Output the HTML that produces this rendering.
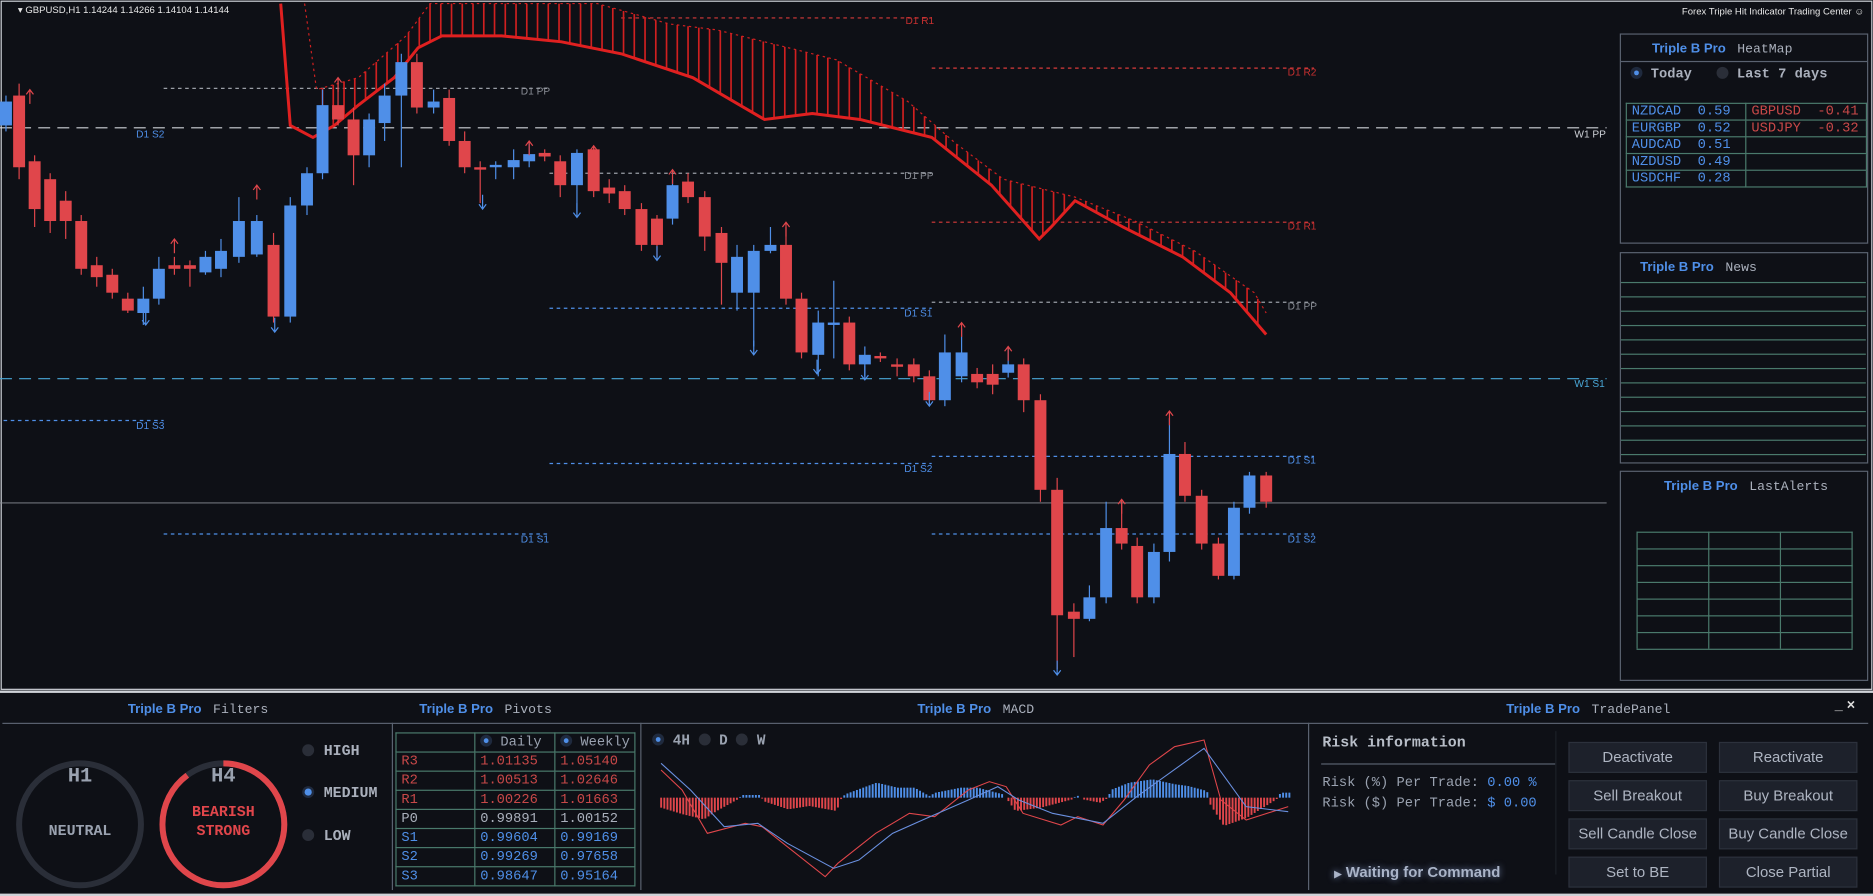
<!DOCTYPE html>
<html><head><meta charset="utf-8"><style>
html,body{margin:0;padding:0;background:#0e1016;overflow:hidden}
#w{position:absolute;left:0;top:0;width:1568px;height:750px;transform:scale(1.19452,1.19467);transform-origin:0 0;background:#0e1016;font-family:"Liberation Mono",monospace;color:#c8ccd6}
.a{position:absolute}
.tb{color:#4f8fe8;font-family:"Liberation Sans",sans-serif;font-weight:bold;font-size:11px}
.tt{color:#aab0bc;font-size:11px}
.pn{position:absolute;border:1px solid #5a6270;background:#0e1016}
.btn{position:absolute;width:114px;height:24px;background:#1d212b;border:1px solid #2c313c;color:#aeb5c2;font-family:"Liberation Sans",sans-serif;font-size:12.5px;text-align:center;line-height:24px}
table{border-collapse:collapse;table-layout:fixed}
.pv td{border:1px solid #4a7a6c;height:15px;padding:0 4px;font-size:11.5px;line-height:15px;white-space:nowrap;overflow:hidden}
.hm td{border:1px solid #4a7a6c;height:13px;padding:0 4px;font-size:11.5px;line-height:13px;white-space:nowrap}
.rad{display:inline-block;width:10px;height:10px;border-radius:50%;background:#2a2e38;vertical-align:middle;position:relative;top:-1px}
.rad.on{background:#1f2a3e}
.rad.on:after{content:"";position:absolute;left:3px;top:3px;width:4px;height:4px;border-radius:50%;background:#4f8fe8}
</style></head><body><div id="w">
<svg class="a" style="left:0;top:0" width="1568" height="578" id="ch">
<rect x="1" y="1" width="1566" height="576" fill="none" stroke="#cfd2d8" stroke-width="1"/>
<line x1="0" y1="107" x2="1345" y2="107" stroke="#cfd2d8" stroke-dasharray="10,6"/>
<line x1="0" y1="317" x2="1345" y2="317" stroke="#4aa8d8" stroke-dasharray="10,6"/>
<line x1="0" y1="421" x2="1345" y2="421" stroke="#8a8e96" stroke-width="0.8"/>
<g stroke-dasharray="3,3" stroke-width="1">
<line x1="137" y1="74" x2="460" y2="74" stroke="#9a9ea6"/>
<line x1="460" y1="145" x2="780" y2="145" stroke="#9a9ea6"/>
<line x1="780" y1="253" x2="1100" y2="253" stroke="#9a9ea6"/>
<line x1="520" y1="15" x2="780" y2="15" stroke="#d83a3a"/>
<line x1="780" y1="57" x2="1100" y2="57" stroke="#d83a3a"/>
<line x1="780" y1="186" x2="1100" y2="186" stroke="#d83a3a"/>
<line x1="460" y1="258" x2="780" y2="258" stroke="#4f8fe8"/>
<line x1="780" y1="382" x2="1100" y2="382" stroke="#4f8fe8"/>
<line x1="460" y1="388" x2="780" y2="388" stroke="#4f8fe8"/>
<line x1="780" y1="447" x2="1100" y2="447" stroke="#4f8fe8"/>
<line x1="137" y1="447" x2="460" y2="447" stroke="#4f8fe8"/>
<line x1="3" y1="352" x2="137" y2="352" stroke="#4f8fe8"/>
</g>
<g font-family="Liberation Sans,sans-serif" font-size="8.5">
<text x="436" y="79" fill="#8a8e96">D1 PP</text><text x="757" y="150" fill="#8a8e96">D1 PP</text><text x="1078" y="259" fill="#8a8e96">D1 PP</text>
<text x="758" y="20" fill="#c83030">D1 R1</text><text x="1078" y="63" fill="#c83030">D1 R2</text><text x="1078" y="192" fill="#c83030">D1 R1</text>
<text x="114" y="115" fill="#4f8fe8">D1 S2</text><text x="114" y="359" fill="#4f8fe8">D1 S3</text><text x="436" y="454" fill="#4f8fe8">D1 S1</text>
<text x="757" y="265" fill="#4f8fe8">D1 S1</text><text x="757" y="395" fill="#4f8fe8">D1 S2</text><text x="1078" y="388" fill="#4f8fe8">D1 S1</text><text x="1078" y="454" fill="#4f8fe8">D1 S2</text>
<text x="1318" y="115" fill="#cfd2d8">W1 PP</text><text x="1318" y="324" fill="#4aa8d8">W1 S1</text>
<text x="15" y="11" fill="#e8e8e8" font-size="8">▾ GBPUSD,H1  1.14244 1.14266 1.14104 1.14144</text>
<text x="1408" y="12" fill="#e8e8e8" font-size="8">Forex Triple Hit Indicator Trading Center ☺</text>
</g>
<g id="band"></g><g id="cd"></g>
</svg>
<div class="pn" style="left:1356px;top:28px;width:206px;height:174px">
<div class="a" style="left:0;top:0;width:206px;height:22px;border-bottom:1px solid #5a6270;line-height:22px"><span class="tb" style="margin-left:26px">Triple B Pro</span> <span class="tt">HeatMap</span></div>
<div class="a" style="left:8px;top:27px;font-size:11.5px;font-weight:bold;color:#aab0bc"><span class="rad on"></span> Today &nbsp; <span class="rad"></span> Last 7 days</div>
<table class="hm a" style="left:4px;top:57px"><tr><td style="color:#4f8fe8;width:92px">NZDCAD&nbsp;&nbsp;0.59</td><td style="color:#c84848;width:92px">GBPUSD&nbsp;&nbsp;-0.41</td></tr><tr><td style="color:#4f8fe8">EURGBP&nbsp;&nbsp;0.52</td><td style="color:#c84848">USDJPY&nbsp;&nbsp;-0.32</td></tr><tr><td style="color:#4f8fe8">AUDCAD&nbsp;&nbsp;0.51</td><td></td></tr><tr><td style="color:#4f8fe8">NZDUSD&nbsp;&nbsp;0.49</td><td></td></tr><tr><td style="color:#4f8fe8">USDCHF&nbsp;&nbsp;0.28</td><td></td></tr></table>
</div>
<div class="pn" style="left:1356px;top:211px;width:206px;height:175px">
<div class="a" style="left:0;top:0;width:206px;height:22px;line-height:22px"><span class="tb" style="margin-left:16px">Triple B Pro</span> <span class="tt">News</span></div>
<div id="news"></div>
</div>
<div class="pn" style="left:1356px;top:394px;width:206px;height:174px">
<div class="a" style="left:0;top:0;width:206px;height:22px;line-height:22px"><span class="tb" style="margin-left:36px">Triple B Pro</span> <span class="tt">LastAlerts</span></div>
<div id="al"></div>
</div>
<div class="a" style="left:0;top:578px;width:1568px;height:172px;border-top:2px solid #cfd2d8;box-sizing:border-box;background:#0e1016"></div>
<div class="a" style="left:2px;top:605px;width:1562px;height:1px;background:#5a6270"></div>
<div class="a" style="left:0;top:748px;width:1568px;height:2px;background:#cfd2d8"></div>
<div class="a" style="left:328px;top:605px;width:1px;height:140px;background:#5a6270"></div>
<div class="a" style="left:536px;top:605px;width:1px;height:140px;background:#5a6270"></div>
<div class="a" style="left:1095px;top:605px;width:1px;height:140px;background:#5a6270"></div>
<div class="a" style="left:107px;top:584px"><span class="tb">Triple B Pro</span> <span class="tt">Filters</span></div>
<div class="a" style="left:351px;top:584px"><span class="tb">Triple B Pro</span> <span class="tt">Pivots</span></div>
<div class="a" style="left:768px;top:584px"><span class="tb">Triple B Pro</span> <span class="tt">MACD</span></div>
<div class="a" style="left:1261px;top:584px"><span class="tb">Triple B Pro</span> <span class="tt">TradePanel</span></div>
<div class="a" style="left:1536px;top:583px;color:#ddd;font-size:12px;font-family:'Liberation Sans',sans-serif;font-weight:bold">_ ×</div>
<svg class="a" style="left:0;top:606px" width="330" height="142">
<circle cx="67" cy="84" r="51" fill="none" stroke="#2a2e38" stroke-width="5"/>
<circle cx="187" cy="84" r="51" fill="none" stroke="#2a2e38" stroke-width="5"/>
<circle cx="187" cy="84" r="51" fill="none" stroke="#e0464b" stroke-width="5" stroke-dasharray="288 320" transform="rotate(-90 187 84)"/>
<text x="67" y="48" fill="#9aa2b0" font-size="17" font-weight="bold" text-anchor="middle" font-family="Liberation Mono">H1</text>
<text x="67" y="93" fill="#9aa2b0" font-size="12.5" font-weight="bold" text-anchor="middle" font-family="Liberation Mono">NEUTRAL</text>
<text x="187" y="48" fill="#9aa2b0" font-size="17" font-weight="bold" text-anchor="middle" font-family="Liberation Mono">H4</text>
<text x="187" y="77" fill="#e0464b" font-size="12.5" font-weight="bold" text-anchor="middle" font-family="Liberation Mono">BEARISH</text>
<text x="187" y="93" fill="#e0464b" font-size="12.5" font-weight="bold" text-anchor="middle" font-family="Liberation Mono">STRONG</text>
<circle cx="258" cy="22" r="5" fill="#2a2e38"/><circle cx="258" cy="57" r="5" fill="#1f2a3e"/><circle cx="258" cy="57" r="3" fill="#4f8fe8"/><circle cx="258" cy="93" r="5" fill="#2a2e38"/>
<g fill="#aab0bc" font-size="12.5" font-weight="bold" font-family="Liberation Mono"><text x="271" y="26">HIGH</text><text x="271" y="61">MEDIUM</text><text x="271" y="97">LOW</text></g>
</svg>
<table class="pv a" style="left:331px;top:613px;width:200px">
<col style="width:66px"><col style="width:67px"><col style="width:67px">
<tr><td></td><td style="color:#9aa2b0"><span class="rad on"></span> Daily</td><td style="color:#9aa2b0"><span class="rad on"></span> Weekly</td></tr>
<tr style="color:#c84848"><td>R3</td><td>1.01135</td><td>1.05140</td></tr>
<tr style="color:#c84848"><td>R2</td><td>1.00513</td><td>1.02646</td></tr>
<tr style="color:#c84848"><td>R1</td><td>1.00226</td><td>1.01663</td></tr>
<tr style="color:#aab0bc"><td>P0</td><td>0.99891</td><td>1.00152</td></tr>
<tr style="color:#4f8fe8"><td>S1</td><td>0.99604</td><td>0.99169</td></tr>
<tr style="color:#4f8fe8"><td>S2</td><td>0.99269</td><td>0.97658</td></tr>
<tr style="color:#4f8fe8"><td>S3</td><td>0.98647</td><td>0.95164</td></tr>
</table>
<div class="a" style="left:546px;top:613px;font-size:12px;font-weight:bold;color:#9aa2b0"><span class="rad on"></span> 4H <span class="rad"></span> D <span class="rad"></span> W</div>
<svg class="a" style="left:0;top:0" width="1568" height="750" id="macd"></svg>
<div class="a" style="left:1107px;top:615px;font-size:12.5px;font-weight:bold;color:#b8bec8">Risk information</div>
<div class="a" style="left:1106px;top:639px;width:196px;height:1px;background:#5a6270"></div>
<div class="a" style="left:1302px;top:612px;width:1px;height:120px;background:#1c2028"></div>
<div class="a" style="left:1107px;top:647px;font-size:11.5px;color:#9aa2b0;line-height:17px">Risk (%) Per Trade: <span style="color:#4f8fe8">0.00 %</span><br>Risk ($) Per Trade: <span style="color:#4f8fe8">$ 0.00</span></div>
<div class="a" style="left:1117px;top:723px;font-family:'Liberation Sans',sans-serif;font-weight:bold;font-size:12.5px;color:#aab4c8;text-shadow:0 0 6px #6a7aa0"><span style="font-size:8px">▶</span> Waiting for Command</div>
<div class="btn" style="left:1313px;top:621px">Deactivate</div><div class="btn" style="left:1439px;top:621px">Reactivate</div>
<div class="btn" style="left:1313px;top:653px">Sell Breakout</div><div class="btn" style="left:1439px;top:653px">Buy Breakout</div>
<div class="btn" style="left:1313px;top:685px">Sell Candle Close</div><div class="btn" style="left:1439px;top:685px">Buy Candle Close</div>
<div class="btn" style="left:1313px;top:717px">Set to BE</div><div class="btn" style="left:1439px;top:717px">Close Partial</div>
</div>
<script>
var NS="http://www.w3.org/2000/svg";
function el(p,t,a){var e=document.createElementNS(NS,t);for(var k in a)e.setAttribute(k,a[k]);p.appendChild(e);return e}
var lo=[[235,3],[243,105],[262,115],[280,105],[300,88],[330,65],[350,40],[370,30],[420,30],[470,35],[520,45],[580,65],[640,100],[680,95],[720,100],[780,115],[830,155],[870,200],[880,190],[900,168],[940,190],[990,215],[1030,245],[1060,280]];
var up=[[255,3],[265,75],[300,65],[340,30],[360,3],[500,3],[560,20],[600,25],[640,35],[700,50],[760,85],[800,120],[840,150],[900,165],[950,185],[1000,210],[1050,245],[1060,262]];
function interp(a,x){for(var i=0;i<a.length-1;i++){if(x>=a[i][0]&&x<=a[i+1][0]){var t=(x-a[i][0])/(a[i+1][0]-a[i][0]);return a[i][1]+t*(a[i+1][1]-a[i][1])}}return null}
var b=document.getElementById("band");
for(var x=270;x<1058;x+=9){var l=interp(lo,x),u=interp(up,x);if(l!=null&&u!=null&&l>u+3)el(b,"line",{x1:x,x2:x,y1:u,y2:l,stroke:"#d02020","stroke-width":1.4})}
el(b,"polyline",{points:lo.map(p=>p.join(",")).join(" "),fill:"none",stroke:"#e02020","stroke-width":2.5});
el(b,"polyline",{points:up.map(p=>p.join(",")).join(" "),fill:"none",stroke:"#d02020","stroke-width":1,"stroke-dasharray":"2,3"});
var C=[[5,105,85,80,110],[16,80,140,70,150],[29,135,175,130,190],[42,150,185,145,195],[55,168,185,160,200],[68,185,225,180,230],[81,222,232,215,240],[94,230,245,225,250],[107,250,260,245,262],[120,262,250,240,272],[133,250,225,215,255],[146,222,225,215,230],[159,222,225,218,240],[172,228,215,210,230],[185,225,210,200,232],[200,215,185,165,220],[215,213,185,180,215],[229,205,265,195,270],[243,265,172,165,270],[257,172,145,140,180],[270,145,88,75,150],[283,88,100,65,105],[296,100,130,90,155],[309,130,100,95,140],[322,103,80,70,118],[336,80,52,45,140],[349,52,90,45,95],[363,90,85,75,95],[376,82,118,75,122],[389,118,140,110,145],[402,140,141,135,170],[415,139,138,135,150],[430,140,134,125,150],[443,135,129,120,140],[456,128,131,125,135],[469,135,155,130,165],[483,155,128,125,178],[497,125,160,122,165],[510,157,162,150,170],[523,160,175,155,180],[537,175,205,170,210],[550,183,205,180,215],[563,183,155,150,188],[576,152,165,145,170],[590,165,198,160,210],[604,195,220,190,255],[617,245,215,205,260],[631,245,210,205,290],[645,210,205,190,212],[658,205,250,190,255],[671,250,295,245,300],[685,297,270,260,315],[698,271,270,235,300],[711,270,305,265,310],[724,305,297,290,315],[737,298,300,295,303],[751,305,306,300,315],[765,305,315,300,320],[778,315,335,310,340],[791,335,295,280,340],[805,315,295,275,320],[818,313,320,308,325],[831,313,322,305,330],[844,312,305,290,316],[857,305,335,300,345],[871,335,410,330,420],[885,410,515,400,560],[899,512,518,505,550],[912,518,500,490,520],[926,500,442,420,505],[939,442,455,420,460],[952,457,500,450,505],[966,500,462,455,505],[979,462,380,350,470],[992,380,415,370,420],[1006,415,455,410,460],[1020,455,482,450,485],[1033,482,425,420,485],[1046,425,398,395,430],[1060,398,420,395,425]];
var cd=document.getElementById("cd");
C.forEach(function(c){var bull=c[2]<c[1];var col=bull?"#4f8fe8":"#e0464b";el(cd,"line",{x1:c[0],x2:c[0],y1:c[3],y2:c[4],stroke:col,"stroke-width":1});var t=Math.min(c[1],c[2]),h=Math.max(2,Math.abs(c[1]-c[2]));el(cd,"rect",{x:c[0]-5,y:t,width:10,height:h,fill:col})});
[[146,200],[215,155],[283,65],[443,118],[497,122],[563,142],[658,186],[805,270],[844,290],[939,418],[979,344],[25,75]].forEach(function(a){el(cd,"path",{d:"M"+a[0]+","+(a[1]+12)+"V"+a[1]+"M"+(a[0]-3)+","+(a[1]+4)+"L"+a[0]+","+a[1]+"L"+(a[0]+3)+","+(a[1]+4),stroke:"#e0464b",fill:"none"})});
[[122,272],[230,278],[404,175],[483,182],[550,218],[631,297],[684,313],[724,318],[778,340],[885,565]].forEach(function(a){el(cd,"path",{d:"M"+a[0]+","+(a[1]-12)+"V"+a[1]+"M"+(a[0]-3)+","+(a[1]-4)+"L"+a[0]+","+a[1]+"L"+(a[0]+3)+","+(a[1]-4),stroke:"#4f8fe8",fill:"none"})});
var n=document.getElementById("news");var s="";for(var i=0;i<13;i++)s+='<div class="a" style="left:0;top:'+(24+i*12)+'px;width:205px;height:1px;background:#4a7a6c"></div>';n.innerHTML=s;
var al=document.getElementById("al");s="";for(var i=0;i<8;i++)s+='<div class="a" style="left:13px;top:'+(50+i*14)+'px;width:181px;height:1px;background:#4a7a6c"></div>';for(var j=0;j<4;j++)s+='<div class="a" style="left:'+(13+j*60)+'px;top:50px;width:1px;height:98px;background:#4a7a6c"></div>';al.innerHTML=s;
var m=document.getElementById("macd");
function X(zx){return (640+zx*660/1568)*0.83716}function Y(zy){return (690+zy/3)*0.83705}
var env=[[48,-30],[100,-50],[150,-65],[180,-40],[230,-5],[240,8],[285,8],[290,-10],[350,-35],[400,-25],[465,-40],[475,-5],[485,10],[560,45],[610,30],[650,30],[685,5],[700,15],[760,30],[800,30],[860,10],[870,-5],[890,-40],[950,-30],[1025,-5],[1035,8],[1050,-5],[1090,-15],[1105,-5],[1120,25],[1160,45],[1215,55],[1270,40],[1300,35],[1345,20],[1350,-15],[1385,-85],[1440,-60],[1510,-5],[1520,15],[1545,15]];
var z0=Y(323);
for(var zx=48;zx<=1545;zx+=7.5){var v=interp(env,zx);if(v==null)continue;var h=Math.abs(v)/3*0.837;if(h<0.5)continue;el(m,"rect",{x:X(zx),y:v>0?z0-h:z0,width:1.6,height:h,fill:v>0?"#4f8fe8":"#e0464b"})}
var rl=[[50,240],[100,300],[160,430],[250,400],[290,410],[350,470],[440,560],[470,520],[560,430],[640,370],[700,380],[780,300],[830,275],[870,290],[910,370],[1000,405],[1040,380],[1100,405],[1150,330],[1210,225],[1270,170],[1340,150],[1380,330],[1440,390],[1540,350]];
var bl=[[50,220],[120,300],[200,410],[280,400],[350,460],[460,535],[520,510],[600,430],[680,385],[780,330],[850,290],[900,330],[980,370],[1100,400],[1180,320],[1340,175],[1440,350],[1540,365]];
el(m,"polyline",{points:rl.map(p=>X(p[0])+","+Y(p[1])).join(" "),fill:"none",stroke:"#e0464b","stroke-width":0.9});
el(m,"polyline",{points:bl.map(p=>X(p[0])+","+Y(p[1])).join(" "),fill:"none",stroke:"#6a90e0","stroke-width":0.9});
</script>
</body></html>
